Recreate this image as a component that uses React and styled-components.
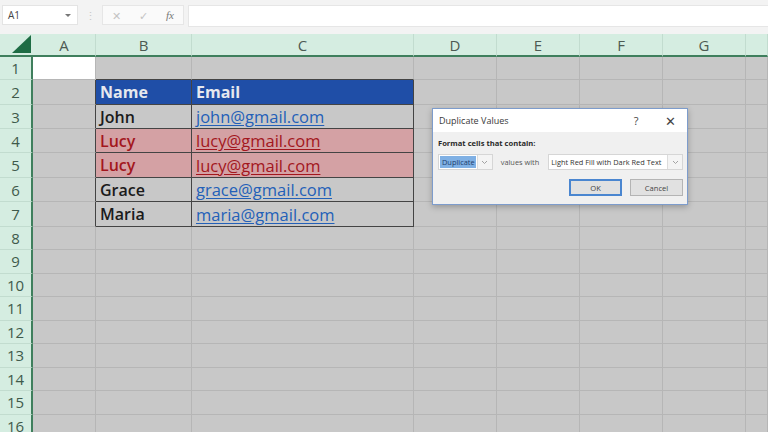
import React from "react";
import styled, { createGlobalStyle } from "styled-components";

const GlobalStyle = createGlobalStyle`
  html, body {
    margin: 0;
    padding: 0;
    width: 768px;
    height: 432px;
    overflow: hidden;
    background: #f3f3f3;
    font-family: "Open Sans", "Noto Sans", sans-serif;
  }
`;

const columns = ["A", "B", "C", "D", "E", "F", "G", ""];
const colWidths = "33px 63px 96px 222px 83px 83px 83px 83px 1fr";
const rowHeights = [23, 25, 24, 24, 25, 24, 25, 23, 23.5, 23.5, 23.5, 23.5, 23.5, 23.5, 23.5, 23.5];

const data = {
  2: { b: "Name", c: "Email", kind: "head" },
  3: { b: "John", c: "john@gmail.com", kind: "plain" },
  4: { b: "Lucy", c: "lucy@gmail.com", kind: "dup" },
  5: { b: "Lucy", c: "lucy@gmail.com", kind: "dup" },
  6: { b: "Grace", c: "grace@gmail.com", kind: "plain" },
  7: { b: "Maria", c: "maria@gmail.com", kind: "plain" },
};

const inTable = (c, r) => (c === 1 || c === 2) && r >= 2 && r <= 7;

const Page = styled.div`
  position: relative;
  width: 768px;
  height: 432px;
  display: flex;
  flex-direction: column;
`;

const Toolbar = styled.div`
  height: 34px;
  box-sizing: border-box;
  padding: 5px 0 0 2px;
  display: flex;
  align-items: flex-start;
  background: #f3f3f3;
`;

const NameBox = styled.div`
  width: 76px;
  height: 20px;
  box-sizing: border-box;
  background: #ffffff;
  border: 1px solid #e4e4e4;
  display: flex;
  align-items: center;
  justify-content: space-between;
  padding: 0 6px 0 5px;
  font-size: 10px;
  color: #444;
`;

const Caret = styled.span`
  width: 0;
  height: 0;
  border-left: 3px solid transparent;
  border-right: 3px solid transparent;
  border-top: 3px solid #777;
`;

const Dots = styled.div`
  width: 24px;
  height: 20px;
  display: flex;
  align-items: center;
  justify-content: center;
  color: #c8c8c8;
  font-size: 11px;
`;

const FxBox = styled.div`
  width: 82px;
  height: 20px;
  box-sizing: border-box;
  background: #fafafa;
  border: 1px solid #e6e6e6;
  display: flex;
  align-items: center;
  justify-content: space-around;
  color: #c4c4c4;
  font-size: 11px;
`;

const Fx = styled.span`
  font-family: "Liberation Serif", serif;
  font-style: italic;
  color: #777;
  font-size: 11px;
`;

const Formula = styled.div`
  flex: 1;
  height: 20px;
  margin-left: 4px;
  background: #ffffff;
  border: 1px solid #e6e6e6;
  border-right: none;
`;

const Sheet = styled.div`
  display: grid;
  grid-template-columns: ${colWidths};
  grid-template-rows: 23px ${rowHeights.map((h) => h + "px").join(" ")};
  flex: 1;
  overflow: hidden;
`;

const Corner = styled.div`
  background: #d5ede1;
  border-bottom: 2px solid #3f7f5d;
  box-sizing: border-box;
  display: flex;
  align-items: flex-end;
  justify-content: flex-end;
  padding: 0 2px 2px 0;
`;

const ColHead = styled.div`
  background: #d5ede1;
  border-bottom: 2px solid #3f7f5d;
  border-right: 1px solid #c2dccf;
  box-sizing: border-box;
  display: flex;
  align-items: center;
  justify-content: center;
  font-size: 15px;
  color: #4d5a53;
`;

const RowHead = styled.div`
  background: #d5ede1;
  border-right: 2px solid #3f7f5d;
  border-bottom: 1px solid #c2dccf;
  box-sizing: border-box;
  display: flex;
  align-items: center;
  justify-content: center;
  font-size: 15px;
  color: #3f5a4b;
`;

const fills = {
  white: "#ffffff",
  gray: "#c8c8c8",
  head: "#1f4ea7",
  dup: "#d4a1a4",
  plain: "#c8c8c8",
};

const Cell = styled.div`
  background: ${(p) => fills[p.$fill]};
  border-right: 1px solid ${(p) => (p.$darkRight ? "#444" : "#b6b6b6")};
  border-bottom: 1px solid ${(p) => (p.$darkBottom ? "#444" : "#b6b6b6")};
  box-sizing: border-box;
  display: flex;
  align-items: center;
  padding-left: 4px;
  font-size: 16px;
  white-space: nowrap;
  overflow: hidden;
  font-weight: ${(p) => (p.$fill === "head" ? 700 : 600)};
  color: ${(p) =>
    p.$fill === "head" ? "#e6e8ee" : p.$fill === "dup" ? "#a3161d" : "#1b1b1b"};
`;

const Link = styled.span`
  font-weight: 400;
  font-size: 16.5px;
  text-decoration: underline;
  text-underline-offset: 2px;
  color: ${(p) => (p.$dup ? "#a3161d" : "#2360b8")};
`;

const Dialog = styled.div`
  position: absolute;
  left: 432px;
  top: 108px;
  width: 256px;
  height: 97px;
  box-sizing: border-box;
  border: 1px solid #7d9ccc;
  background: #f0f0f0;
  box-shadow: 0 2px 6px rgba(0, 0, 0, 0.25);
  display: flex;
  flex-direction: column;
  font-family: "Open Sans", "Noto Sans", sans-serif;
  white-space: nowrap;
`;

const TitleBar = styled.div`
  height: 23px;
  background: #ffffff;
  display: flex;
  align-items: center;
  padding-left: 6px;
  font-size: 9px;
  color: #3a3a3a;
`;

const Title = styled.span`
  flex: 1;
`;

const TitleBtn = styled.span`
  width: 34px;
  text-align: center;
  color: #444;
  font-size: ${(p) => p.$size || 11}px;
`;

const Body = styled.div`
  padding: 6px 4px 0 5px;
  display: flex;
  flex-direction: column;
`;

const Label = styled.div`
  font-size: 7.6px;
  font-weight: 700;
  color: #2a2a2a;
  margin-bottom: 6px;
`;

const Controls = styled.div`
  display: flex;
  align-items: center;
`;

const Select = styled.div`
  width: ${(p) => p.$w}px;
  height: 16px;
  box-sizing: border-box;
  background: #ffffff;
  border: 1px solid #d6d6d6;
  display: flex;
  align-items: stretch;
  font-size: 7.4px;
  color: #333;
  overflow: hidden;
`;

const SelectText = styled.div`
  flex: 1;
  display: flex;
  align-items: center;
  padding-left: 2px;
  overflow: hidden;
  background: ${(p) => (p.$hl ? "#7fb0e4" : "transparent")};
  color: ${(p) => (p.$hl ? "#1c3c6c" : "#333")};
  margin: ${(p) => (p.$hl ? "1px" : "0")};
`;

const Arrow = styled.div`
  width: 14px;
  flex: none;
  border-left: 1px solid #dcdcdc;
  background: #f4f4f4;
  display: flex;
  align-items: center;
  justify-content: center;
`;

const Between = styled.span`
  font-size: 7.4px;
  color: #555;
  margin: 0 9px 0 8px;
`;

const Buttons = styled.div`
  display: flex;
  justify-content: flex-end;
  gap: 8px;
  margin-top: 9px;
`;

const Button = styled.div`
  width: 53px;
  height: 17px;
  box-sizing: border-box;
  background: #e1e1e1;
  border: ${(p) => (p.$primary ? "2px solid #4a86d0" : "1px solid #b4b4b4")};
  display: flex;
  align-items: center;
  justify-content: center;
  font-size: 7.6px;
  color: #444;
`;

const ChevronDown = () => (
  <svg width="7" height="5" viewBox="0 0 7 5">
    <polyline points="1,1 3.5,3.5 6,1" fill="none" stroke="#9a9a9a" strokeWidth="0.9" />
  </svg>
);

export default function App() {
  const cells = [];
  cells.push(
    <Corner key="corner">
      <svg width="19" height="18" viewBox="0 0 19 18">
        <polygon points="19,0 19,18 0,18" fill="#1e6c44" />
      </svg>
    </Corner>
  );
  columns.forEach((c, i) => cells.push(<ColHead key={"h" + i}>{c}</ColHead>));

  rowHeights.forEach((_, idx) => {
    const r = idx + 1;
    cells.push(<RowHead key={"r" + r}>{r}</RowHead>);
    columns.forEach((_, ci) => {
      const row = data[r];
      let fill = "gray";
      let content = null;
      if (r === 1 && ci === 0) fill = "white";
      if (row && (ci === 1 || ci === 2)) {
        fill = row.kind;
        if (ci === 1) content = row.b;
        else
          content =
            row.kind === "head" ? row.c : <Link $dup={row.kind === "dup"}>{row.c}</Link>;
      }
      cells.push(
        <Cell
          key={r + "-" + ci}
          $fill={fill}
          $darkRight={inTable(ci, r) || inTable(ci + 1, r)}
          $darkBottom={inTable(ci, r) || inTable(ci, r + 1)}
        >
          {content}
        </Cell>
      );
    });
  });

  return (
    <>
      <GlobalStyle />
      <Page>
        <Toolbar>
          <NameBox>
            A1
            <Caret />
          </NameBox>
          <Dots>⋮</Dots>
          <FxBox>
            <span>✕</span>
            <span>✓</span>
            <Fx>fx</Fx>
          </FxBox>
          <Formula />
        </Toolbar>
        <Sheet>{cells}</Sheet>
        <Dialog>
          <TitleBar>
            <Title>Duplicate Values</Title>
            <TitleBtn>?</TitleBtn>
            <TitleBtn $size={13}>✕</TitleBtn>
          </TitleBar>
          <Body>
            <Label>Format cells that contain:</Label>
            <Controls>
              <Select $w={56}>
                <SelectText $hl>Duplicate</SelectText>
                <Arrow>
                  <ChevronDown />
                </Arrow>
              </Select>
              <Between>values with</Between>
              <Select $w={138}>
                <SelectText>Light Red Fill with Dark Red Text</SelectText>
                <Arrow>
                  <ChevronDown />
                </Arrow>
              </Select>
            </Controls>
            <Buttons>
              <Button $primary>OK</Button>
              <Button>Cancel</Button>
            </Buttons>
          </Body>
        </Dialog>
      </Page>
    </>
  );
}
